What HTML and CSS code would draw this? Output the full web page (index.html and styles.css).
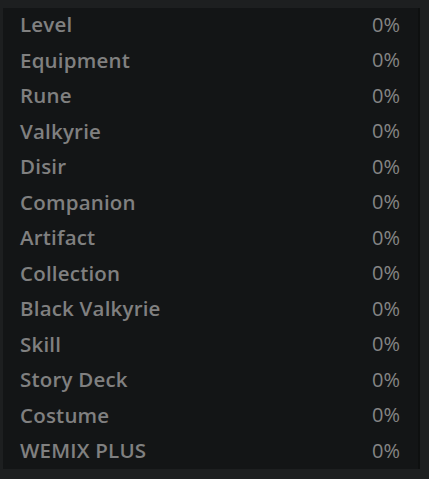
FILE: index.html
```html
<!DOCTYPE html>
<html>
<head>
<meta charset="utf-8">
<link rel="stylesheet" href="styles.css">
</head>
<body>
<div class="frame">
  <div class="panel">
    <ul class="stats">
      <li class="row"><span class="name">Level</span><span class="val">0%</span></li>
      <li class="row"><span class="name">Equipment</span><span class="val">0%</span></li>
      <li class="row"><span class="name">Rune</span><span class="val">0%</span></li>
      <li class="row"><span class="name">Valkyrie</span><span class="val">0%</span></li>
      <li class="row"><span class="name">Disir</span><span class="val">0%</span></li>
      <li class="row"><span class="name">Companion</span><span class="val">0%</span></li>
      <li class="row"><span class="name">Artifact</span><span class="val">0%</span></li>
      <li class="row"><span class="name">Collection</span><span class="val">0%</span></li>
      <li class="row"><span class="name">Black Valkyrie</span><span class="val">0%</span></li>
      <li class="row"><span class="name">Skill</span><span class="val">0%</span></li>
      <li class="row"><span class="name">Story Deck</span><span class="val">0%</span></li>
      <li class="row"><span class="name">Costume</span><span class="val">0%</span></li>
      <li class="row"><span class="name">WEMIX PLUS</span><span class="val">0%</span></li>
    </ul>
  </div>
</div>
</body>
</html>
```
FILE: styles.css
```css
html, body {
  margin: 0;
  padding: 0;
  background: #1d1f20;
  width: 429px;
  height: 479px;
  overflow: hidden;
}
.frame {
  padding: 8px 9px 10px 3px;
  height: 479px;
  box-sizing: border-box;
}
.panel {
  background: #131516;
  height: 100%;
  border-right: 2px solid #0e1010;
  box-sizing: border-box;
}
.stats {
  list-style: none;
  margin: 0;
  padding: 0 18px 0 17px;
  position: relative;
  top: -1.5px;
}
.row {
  display: flex;
  justify-content: space-between;
  align-items: center;
  height: 35.5px;
  font-family: "Open Sans", sans-serif;
  font-weight: 600;
  font-size: 20.5px;
  letter-spacing: 0.2px;
  color: #808080;
}
.val {
  font-weight: 400;
  font-size: 20px;
  letter-spacing: 0;
  color: #858585;
}
```
